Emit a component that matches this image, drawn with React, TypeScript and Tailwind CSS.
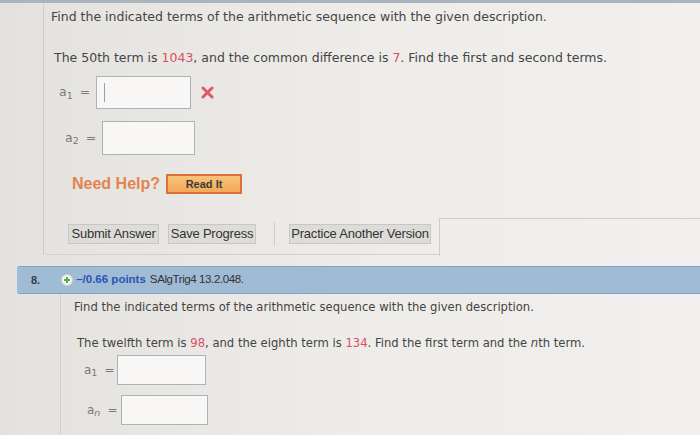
import React from "react";

const qFont = { fontFamily: '"DejaVu Sans", Verdana, sans-serif' };
const btnFont = { fontFamily: '"Liberation Sans", Arial, sans-serif' };

function MathLabel({ sub, italicSub, size }: { sub: string; italicSub?: boolean; size: string }) {
  return (
    <span className={`${size} text-[#7a7a7a]`} style={qFont}>
      a
      <sub className={"text-[9.5px] " + (italicSub ? "italic" : "")}>{sub}</sub>
      <span className="ml-[7px]">=</span>
    </span>
  );
}

function AnswerBox({ cursor, w, h }: { cursor?: boolean; w: string; h: string }) {
  return (
    <div className={`${w} ${h} border border-[#aab2ba] bg-[#f8f7f5] flex items-center pl-[7px]`}>
      {cursor && <div className="w-px h-[19px] bg-[#9aa0a6]" />}
    </div>
  );
}

function GrayButton({ children, w }: { children: React.ReactNode; w: string }) {
  return (
    <div
      className={`${w} h-[20px] flex items-center justify-center bg-[#dddcd9] border border-[#c8c7c3] text-[13px] tracking-[-0.2px] text-[#333]`}
      style={btnFont}
    >
      {children}
    </div>
  );
}

export default function App() {
  return (
    <div className="w-[700px] h-[435px] overflow-hidden bg-gradient-to-r from-[#e4e2de] via-[#eeece9] to-[#f1f0ee] text-[#444]">
      <div className="h-[3px] bg-[#aab4bc]" />

      {/* question 7 */}
      <div className="ml-[43px] border-l border-[#cfcdc9] pl-[7px] pt-[6px]">
        <p className="text-[12.5px] leading-[16px] text-[#444]" style={qFont}>
          Find the indicated terms of the arithmetic sequence with the given description.
        </p>
        <p className="mt-[25px] pl-[3px] text-[12.5px] leading-[16px] text-[#444]" style={qFont}>
          The 50th term is <span className="text-[#d9505f]">1043</span>, and the common difference is{" "}
          <span className="text-[#d9505f]">7</span>. Find the first and second terms.
        </p>

        <div className="mt-[10px] flex items-center pl-[8px]">
          <MathLabel sub="1" size="text-[12.5px]" />
          <div className="ml-[6px]">
            <AnswerBox cursor w="w-[95px]" h="h-[33px]" />
          </div>
          <svg className="ml-[10px]" width="13" height="13" viewBox="0 0 13 13">
            <path d="M2 2L11 11M11 2L2 11" stroke="#e0576a" strokeWidth="3" strokeLinecap="round" />
          </svg>
        </div>

        <div className="mt-[12px] flex items-center pl-[14px]">
          <MathLabel sub="2" size="text-[12.5px]" />
          <div className="ml-[6px]">
            <AnswerBox w="w-[93px]" h="h-[34px]" />
          </div>
        </div>

        <div className="mt-[17px] flex items-center pl-[21px]">
          <span className="text-[16px] font-bold text-[#e2844c]" style={btnFont}>
            Need Help?
          </span>
          <div
            className="ml-[6px] w-[76px] h-[20px] flex items-center justify-center border-2 border-[#d9733a] bg-gradient-to-b from-[#f8c47a] to-[#f2a95a] text-[11px] font-bold text-[#3b3b3b]"
            style={btnFont}
          >
            Read It
          </div>
        </div>

        <div className="mt-[22px] flex items-end">
          <div className="w-[395px] -ml-[7px] flex items-center gap-[9px] pl-[24px] pb-[8px] border-b border-[#d3d1cd] rounded-bl-[4px]">
            <GrayButton w="w-[91px]">Submit Answer</GrayButton>
            <GrayButton w="w-[88px]">Save Progress</GrayButton>
            <div className="ml-[9px] w-px h-[24px] bg-[#cfcdc9]" />
            <div className="ml-[5px]">
              <GrayButton w="w-[142px]">Practice Another Version</GrayButton>
            </div>
          </div>
          <div className="flex-1 h-[38px] border-t border-l border-[#cfcdc9] -mb-px" />
        </div>
      </div>

      {/* question 8 header */}
      <div className="mt-[11px] ml-[17px] h-[28px] flex items-center bg-[#9fbbd5] border-t border-b border-[#86a3bd] rounded-l-[3px]">
        <span className="ml-[14px] text-[11px] font-bold text-[#3a3f45]" style={btnFont}>
          8.
        </span>
        <span className="ml-[21px] w-[12px] h-[12px] rounded-full bg-[#f2f4ee] border border-[#c9d3c4] flex items-center justify-center">
          <svg width="8" height="8" viewBox="0 0 8 8">
            <path d="M4 1v6M1 4h6" stroke="#4caf50" strokeWidth="2" />
          </svg>
        </span>
        <span className="ml-[3px] text-[11.5px] font-bold text-[#2c54b4]" style={btnFont}>
          –/0.66 points
        </span>
        <span className="ml-[4px] text-[11.5px] tracking-[-0.4px] text-[#333]" style={btnFont}>
          SAlgTrig4 13.2.048.
        </span>
      </div>

      {/* question 8 body */}
      <div className="ml-[60px] border-l border-[#d3d1cd] pl-[13px] pt-[5px] h-[200px]">
        <p className="text-[11.6px] leading-[16px] text-[#444]" style={qFont}>
          Find the indicated terms of the arithmetic sequence with the given description.
        </p>
        <p className="mt-[20px] pl-[3px] text-[11.6px] leading-[16px] text-[#444]" style={qFont}>
          The twelfth term is <span className="text-[#d9505f]">98</span>, and the eighth term is{" "}
          <span className="text-[#d9505f]">134</span>. Find the first term and the <i>n</i>th term.
        </p>
        <div className="mt-[4px] flex items-center pl-[10px]">
          <MathLabel sub="1" size="text-[12px]" />
          <div className="ml-[3px]">
            <AnswerBox w="w-[89px]" h="h-[30px]" />
          </div>
        </div>
        <div className="mt-[10px] flex items-center pl-[13px]">
          <MathLabel sub="n" italicSub size="text-[12px]" />
          <div className="ml-[4px]">
            <AnswerBox w="w-[87px]" h="h-[30px]" />
          </div>
        </div>
      </div>
    </div>
  );
}
